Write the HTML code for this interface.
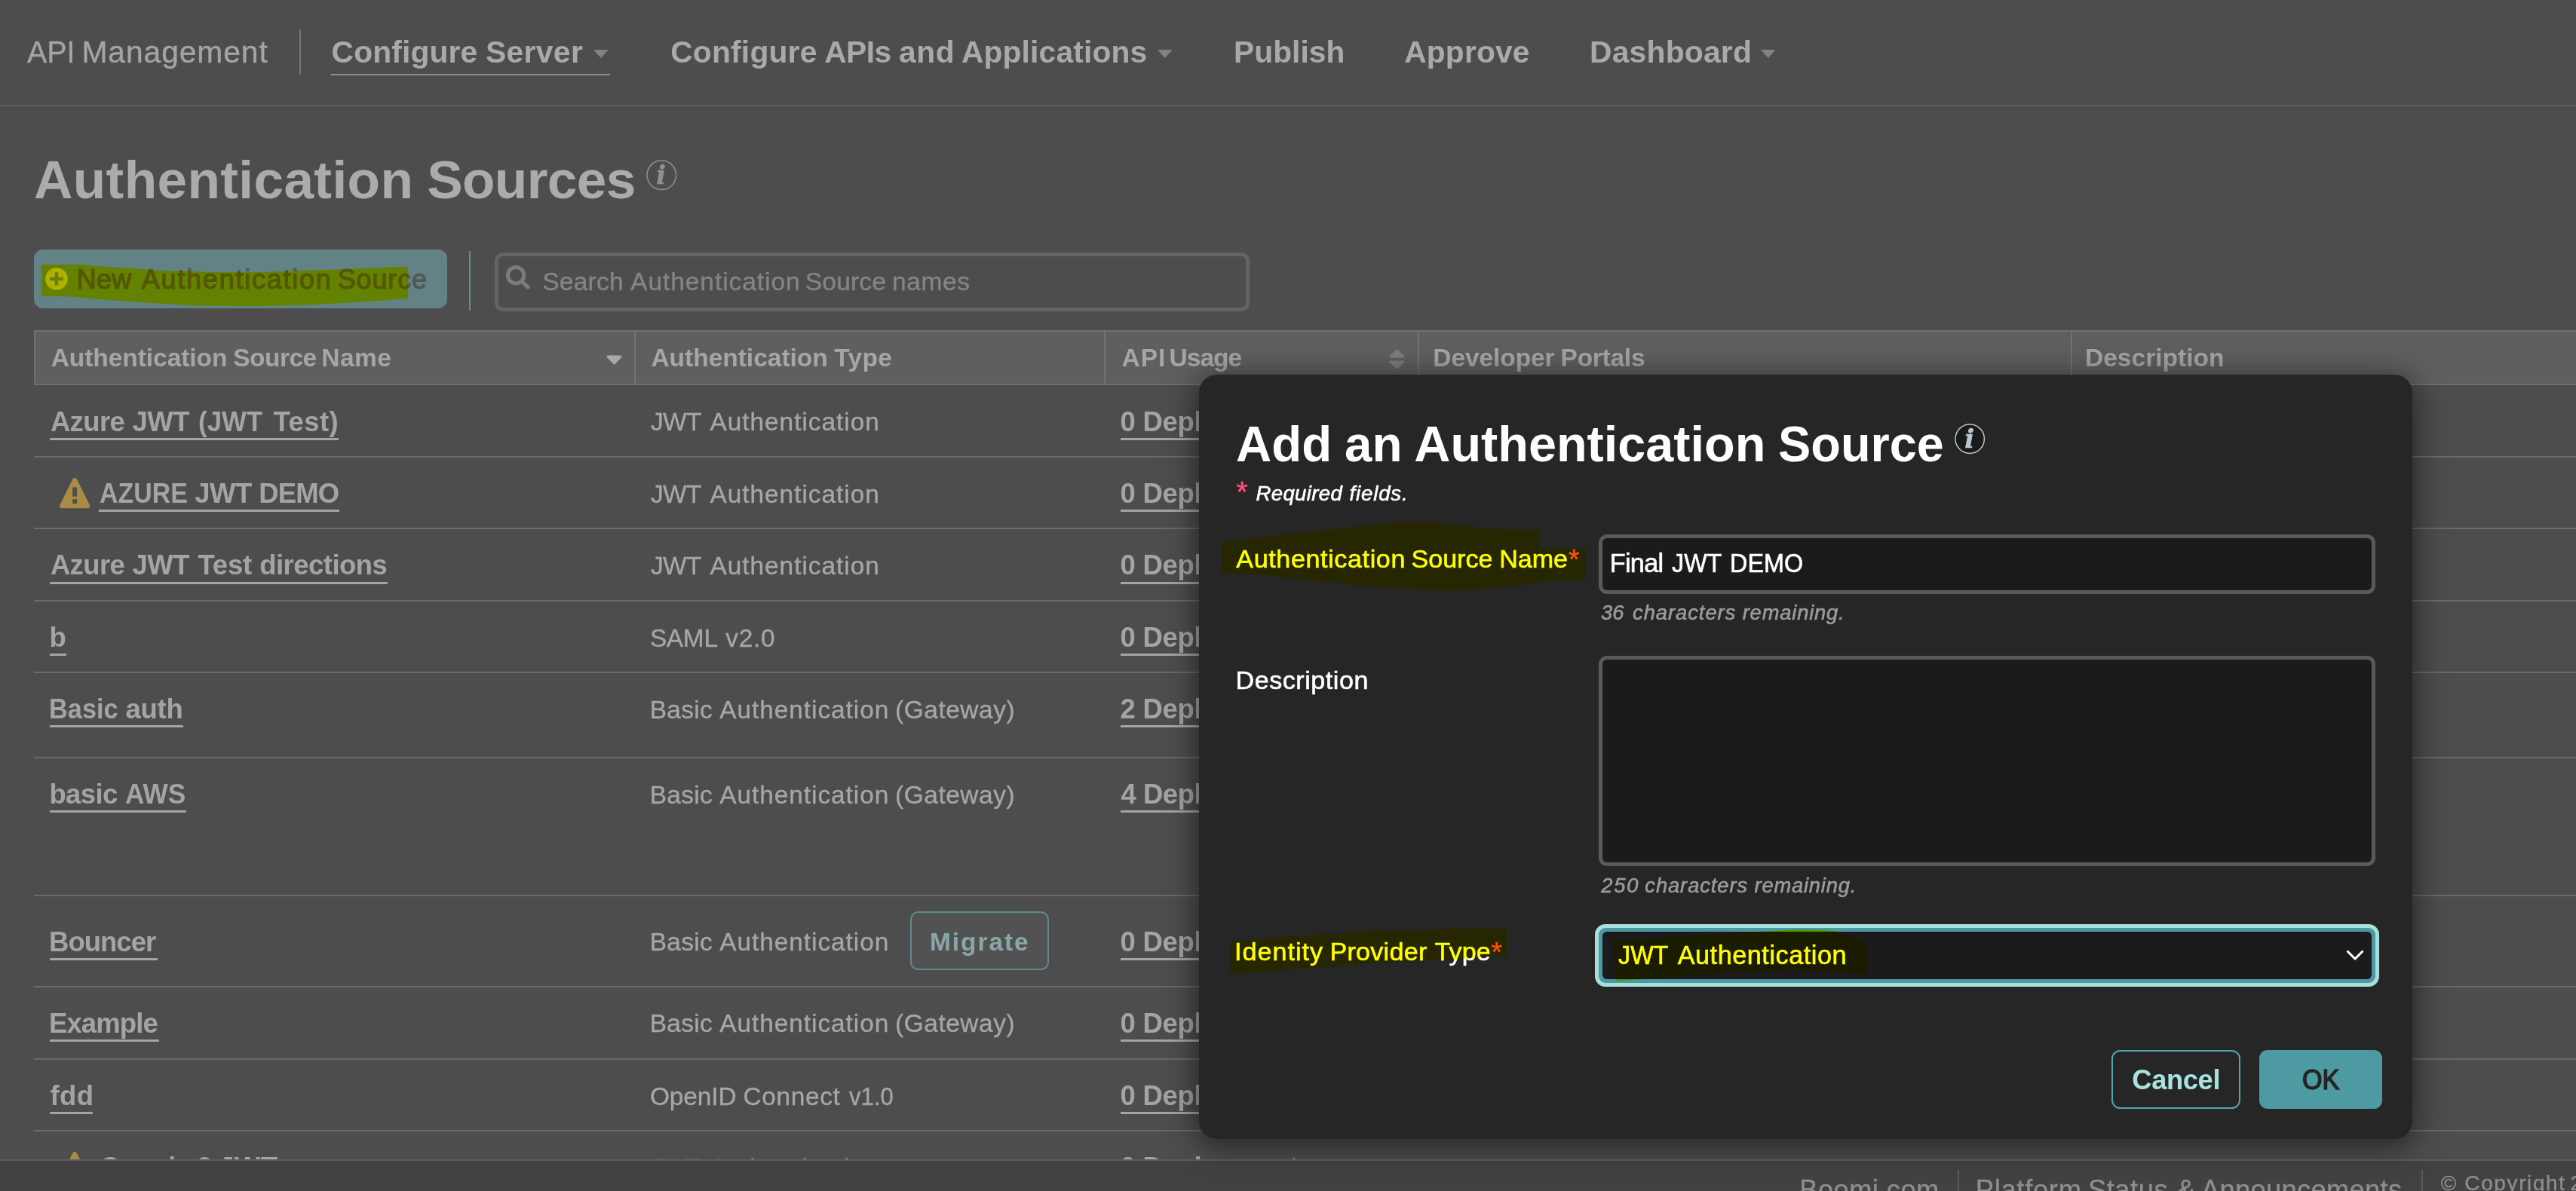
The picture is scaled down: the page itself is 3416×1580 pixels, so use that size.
<!DOCTYPE html>
<html lang="en"><head><meta charset="utf-8"><title>Authentication Sources - API Management</title>
<style>
html,body{margin:0;padding:0}
body{width:3416px;height:1580px;overflow:hidden;background:#4d4d4d;font-family:'Liberation Sans', sans-serif;position:relative}
#page,#modal,#footer{position:absolute;left:0;top:0;width:3416px;height:1580px;overflow:hidden}
span{display:block}
</style></head><body>
<main id="page">
<div style='position:absolute;left:0px;top:139px;width:3416px;height:2px;background:#5e5e5e'></div>
<div style='position:absolute;left:397px;top:39px;width:2px;height:60px;background:#767676'></div>
<div style='position:absolute;left:439px;top:98px;width:370px;height:2px;background:#8b9196'></div>
<svg style='position:absolute;left:786.8px;top:65.5px' width='19.6' height='11' viewBox='0 0 19.6 11'><path d='M0 0H19.6L9.8 11Z' fill='#828282'/></svg>
<svg style='position:absolute;left:1534.6px;top:65.5px' width='19.6' height='11' viewBox='0 0 19.6 11'><path d='M0 0H19.6L9.8 11Z' fill='#828282'/></svg>
<svg style='position:absolute;left:2334.9px;top:65.5px' width='19.6' height='11' viewBox='0 0 19.6 11'><path d='M0 0H19.6L9.8 11Z' fill='#828282'/></svg>
<svg style='position:absolute;left:855.7px;top:210.6px;overflow:visible' width='42.6' height='42.6' viewBox='0 0 42.6 42.6'><circle cx='21.3' cy='21.3' r='19.3' fill='none' stroke='#8c9296' stroke-width='1.5'/></svg>
<div style='position:absolute;left:45px;top:331px;width:548px;height:78px;background:#638285;border-radius:12px'></div>
<svg style='position:absolute;left:60px;top:355px;overflow:visible' width='30' height='30' viewBox='0 0 30 30'><path fill-rule='evenodd' fill='#b0b0b0' d='M15 0.2A14.8 14.8 0 1 1 15 29.8A14.8 14.8 0 1 1 15 0.2Z M12.8 6.3V12.8H6.3V17.2H12.8V23.7H17.2V17.2H23.7V12.8H17.2V6.3Z'/></svg>
<div style='position:absolute;left:622px;top:333px;width:2px;height:79px;background:#5f8c92'></div>
<div style='position:absolute;left:656px;top:335px;width:1000.5px;height:77.5px;box-sizing:border-box;border:5px solid #646464;border-radius:11px;background:#4d4d4d'></div>
<svg style='position:absolute;left:670px;top:351px;overflow:visible' width='34' height='34' viewBox='0 0 34 34'><circle cx='14.1' cy='14.2' r='10.7' fill='none' stroke='#7c7c7c' stroke-width='5'/><path d='M22.2 22.6L30.2 30' stroke='#7c7c7c' stroke-width='5.2' stroke-linecap='round'/></svg>
<div style='position:absolute;left:45px;top:438px;width:3400px;height:73px;box-sizing:border-box;background:#5f5f5f;border:2px solid #707070'></div>
<div style='position:absolute;left:841px;top:440px;width:2px;height:69px;background:#727272'></div>
<div style='position:absolute;left:1464px;top:440px;width:2px;height:69px;background:#727272'></div>
<div style='position:absolute;left:1880px;top:440px;width:2px;height:69px;background:#727272'></div>
<div style='position:absolute;left:2746px;top:440px;width:2px;height:69px;background:#727272'></div>
<svg style='position:absolute;left:803.8px;top:470.8px;overflow:visible' width='21.1' height='12.7' viewBox='0 0 21.1 12.7'><path d='M2 2H19.1L10.55 10.9Z' fill='#aaaaaa' stroke='#aaaaaa' stroke-width='3' stroke-linejoin='round'/></svg>
<svg style='position:absolute;left:1842.4px;top:463px;overflow:visible' width='21.1' height='12.2' viewBox='0 0 21.1 12.2'><path d='M2 10.2H19.1L10.55 2Z' fill='#7c7c7c' stroke='#7c7c7c' stroke-width='3' stroke-linejoin='round'/></svg>
<svg style='position:absolute;left:1842.4px;top:478.2px;overflow:visible' width='21.1' height='12.2' viewBox='0 0 21.1 12.2'><path d='M2 2H19.1L10.55 10.2Z' fill='#7c7c7c' stroke='#7c7c7c' stroke-width='3' stroke-linejoin='round'/></svg>
<div style='position:absolute;left:45px;top:605px;width:3400px;height:2px;background:#6a6a6a'></div>
<div style='position:absolute;left:45px;top:700px;width:3400px;height:2px;background:#6a6a6a'></div>
<div style='position:absolute;left:45px;top:796px;width:3400px;height:2px;background:#6a6a6a'></div>
<div style='position:absolute;left:45px;top:891px;width:3400px;height:2px;background:#6a6a6a'></div>
<div style='position:absolute;left:45px;top:1004px;width:3400px;height:2px;background:#6a6a6a'></div>
<div style='position:absolute;left:45px;top:1187px;width:3400px;height:2px;background:#6a6a6a'></div>
<div style='position:absolute;left:45px;top:1308px;width:3400px;height:2px;background:#6a6a6a'></div>
<div style='position:absolute;left:45px;top:1404px;width:3400px;height:2px;background:#6a6a6a'></div>
<div style='position:absolute;left:45px;top:1499px;width:3400px;height:2px;background:#6a6a6a'></div>
<div style='position:absolute;left:65.9px;top:581px;width:383.1px;height:3px;background:#a4a4a4'></div>
<div style='position:absolute;left:131px;top:676px;width:319.3px;height:3px;background:#a4a4a4'></div>
<div style='position:absolute;left:65.9px;top:772px;width:448.2px;height:3px;background:#a4a4a4'></div>
<div style='position:absolute;left:66.4px;top:867px;width:22.1px;height:3px;background:#a4a4a4'></div>
<div style='position:absolute;left:66.4px;top:962px;width:176.6px;height:3px;background:#a4a4a4'></div>
<div style='position:absolute;left:66.4px;top:1075px;width:180.3px;height:3px;background:#a4a4a4'></div>
<div style='position:absolute;left:66px;top:1271px;width:142.5px;height:3px;background:#a4a4a4'></div>
<div style='position:absolute;left:66px;top:1379px;width:145.0px;height:3px;background:#a4a4a4'></div>
<div style='position:absolute;left:65.6px;top:1475px;width:57.7px;height:3px;background:#a4a4a4'></div>
<div style='position:absolute;left:133px;top:1570px;width:236.2px;height:3px;background:#a4a4a4'></div>
<svg style='position:absolute;left:78.9px;top:633.8px;overflow:visible' width='40.3' height='40.4' viewBox='0 0 40 40'><path d='M20 0 C21.2 0 22.2 0.6 22.8 1.7 L39.5 35.5 C40.6 37.6 39.2 40 36.8 40 L3.2 40 C0.8 40 -0.6 37.6 0.5 35.5 L17.2 1.7 C17.8 0.6 18.8 0 20 0 Z' fill='#a88c43'/><rect x='17.1' y='12.4' width='5.8' height='12.1' fill='#4d4d4d'/><rect x='17.1' y='27.9' width='5.8' height='6' fill='#4d4d4d'/></svg>
<svg style='position:absolute;left:78.9px;top:1528.3px;overflow:visible' width='40.3' height='40.4' viewBox='0 0 40 40'><path d='M20 0 C21.2 0 22.2 0.6 22.8 1.7 L39.5 35.5 C40.6 37.6 39.2 40 36.8 40 L3.2 40 C0.8 40 -0.6 37.6 0.5 35.5 L17.2 1.7 C17.8 0.6 18.8 0 20 0 Z' fill='#a88c43'/><rect x='17.1' y='12.4' width='5.8' height='12.1' fill='#4d4d4d'/><rect x='17.1' y='27.9' width='5.8' height='6' fill='#4d4d4d'/></svg>
<div style='position:absolute;left:1207.3px;top:1209.2px;width:183.6px;height:78.3px;box-sizing:border-box;border:2px solid #5e8a90;border-radius:10.5px;background:#525252'></div>
<span style="position:absolute;left:35.60px;top:45px;font-size:40.8px;line-height:49px;font-weight:400;font-style:normal;color:#a4a4a4;letter-spacing:0.000px;white-space:pre;transform:scaleX(0.9643);transform-origin:0.00px 0;-webkit-text-stroke:0.35px;">API</span>
<span style="position:absolute;left:108.40px;top:45px;font-size:40.8px;line-height:49px;font-weight:400;font-style:normal;color:#a4a4a4;letter-spacing:0.922px;white-space:pre;-webkit-text-stroke:0.35px;">Management</span>
<span style="position:absolute;left:439.60px;top:45px;font-size:40.8px;line-height:49px;font-weight:700;font-style:normal;color:#a9a9a9;letter-spacing:0.119px;white-space:pre;">Configure</span>
<span style="position:absolute;left:643.90px;top:45px;font-size:40.8px;line-height:49px;font-weight:700;font-style:normal;color:#a9a9a9;letter-spacing:0.366px;white-space:pre;">Server</span>
<span style="position:absolute;left:889.20px;top:45px;font-size:40.8px;line-height:49px;font-weight:700;font-style:normal;color:#a9a9a9;letter-spacing:0.194px;white-space:pre;">Configure</span>
<span style="position:absolute;left:1093.20px;top:45px;font-size:40.8px;line-height:49px;font-weight:700;font-style:normal;color:#a9a9a9;letter-spacing:-0.571px;white-space:pre;">APIs</span>
<span style="position:absolute;left:1192.00px;top:45px;font-size:40.8px;line-height:49px;font-weight:700;font-style:normal;color:#a9a9a9;letter-spacing:0.595px;white-space:pre;">and</span>
<span style="position:absolute;left:1274.90px;top:45px;font-size:40.8px;line-height:49px;font-weight:700;font-style:normal;color:#a9a9a9;letter-spacing:0.143px;white-space:pre;">Applications</span>
<span style="position:absolute;left:1636.00px;top:45px;font-size:40.8px;line-height:49px;font-weight:700;font-style:normal;color:#a9a9a9;letter-spacing:0.013px;white-space:pre;">Publish</span>
<span style="position:absolute;left:1862.20px;top:45px;font-size:40.8px;line-height:49px;font-weight:700;font-style:normal;color:#a9a9a9;letter-spacing:0.134px;white-space:pre;">Approve</span>
<span style="position:absolute;left:2108.00px;top:45px;font-size:40.8px;line-height:49px;font-weight:700;font-style:normal;color:#a9a9a9;letter-spacing:0.216px;white-space:pre;">Dashboard</span>
<span style="position:absolute;left:45.00px;top:196px;font-size:71.2px;line-height:85px;font-weight:700;font-style:normal;color:#ababab;letter-spacing:0.354px;white-space:pre;">Authentication</span>
<span style="position:absolute;left:566.20px;top:196px;font-size:71.2px;line-height:85px;font-weight:700;font-style:normal;color:#ababab;letter-spacing:-0.641px;white-space:pre;">Sources</span>
<span style="position:absolute;left:101.70px;top:349px;font-size:36.0px;line-height:43px;font-weight:400;font-style:normal;color:#565656;letter-spacing:0.233px;white-space:pre;-webkit-text-stroke:1.2px #565656;">New</span>
<span style="position:absolute;left:187.80px;top:349px;font-size:36.0px;line-height:43px;font-weight:400;font-style:normal;color:#565656;letter-spacing:1.750px;white-space:pre;-webkit-text-stroke:1.2px #565656;">Authentication</span>
<span style="position:absolute;left:447.70px;top:349px;font-size:36.0px;line-height:43px;font-weight:400;font-style:normal;color:#565656;letter-spacing:0.849px;white-space:pre;-webkit-text-stroke:1.2px #565656;">Source</span>
<span style="position:absolute;left:719.20px;top:354px;font-size:33.6px;line-height:40px;font-weight:400;font-style:normal;color:#858585;letter-spacing:0.214px;white-space:pre;-webkit-text-stroke:0.35px;">Search</span>
<span style="position:absolute;left:836.10px;top:354px;font-size:33.6px;line-height:40px;font-weight:400;font-style:normal;color:#858585;letter-spacing:0.904px;white-space:pre;-webkit-text-stroke:0.35px;">Authentication</span>
<span style="position:absolute;left:1067.80px;top:354px;font-size:33.6px;line-height:40px;font-weight:400;font-style:normal;color:#858585;letter-spacing:0.154px;white-space:pre;-webkit-text-stroke:0.35px;">Source</span>
<span style="position:absolute;left:1183.00px;top:354px;font-size:33.6px;line-height:40px;font-weight:400;font-style:normal;color:#858585;letter-spacing:0.573px;white-space:pre;-webkit-text-stroke:0.35px;">names</span>
<span style="position:absolute;left:67.70px;top:455px;font-size:33.5px;line-height:40px;font-weight:700;font-style:normal;color:#a6a6a6;letter-spacing:-0.055px;white-space:pre;">Authentication</span>
<span style="position:absolute;left:309.30px;top:455px;font-size:33.5px;line-height:40px;font-weight:700;font-style:normal;color:#a6a6a6;letter-spacing:-0.529px;white-space:pre;">Source</span>
<span style="position:absolute;left:426.30px;top:455px;font-size:33.5px;line-height:40px;font-weight:700;font-style:normal;color:#a6a6a6;letter-spacing:0.460px;white-space:pre;">Name</span>
<span style="position:absolute;left:863.40px;top:455px;font-size:33.5px;line-height:40px;font-weight:700;font-style:normal;color:#a6a6a6;letter-spacing:-0.009px;white-space:pre;">Authentication</span>
<span style="position:absolute;left:1106.20px;top:455px;font-size:33.5px;line-height:40px;font-weight:700;font-style:normal;color:#a6a6a6;letter-spacing:0.343px;white-space:pre;">Type</span>
<span style="position:absolute;left:1487.60px;top:455px;font-size:33.5px;line-height:40px;font-weight:700;font-style:normal;color:#a6a6a6;letter-spacing:0.974px;white-space:pre;">API</span>
<span style="position:absolute;left:1550.50px;top:455px;font-size:33.5px;line-height:40px;font-weight:700;font-style:normal;color:#a6a6a6;letter-spacing:-0.958px;white-space:pre;">Usage</span>
<span style="position:absolute;left:1900.30px;top:455px;font-size:33.5px;line-height:40px;font-weight:700;font-style:normal;color:#a6a6a6;letter-spacing:-0.083px;white-space:pre;">Developer</span>
<span style="position:absolute;left:2069.60px;top:455px;font-size:33.5px;line-height:40px;font-weight:700;font-style:normal;color:#a6a6a6;letter-spacing:-0.275px;white-space:pre;">Portals</span>
<span style="position:absolute;left:2765.00px;top:455px;font-size:33.5px;line-height:40px;font-weight:700;font-style:normal;color:#a6a6a6;letter-spacing:0.017px;white-space:pre;">Description</span>
<span style="position:absolute;left:66.90px;top:538px;font-size:36.5px;line-height:44px;font-weight:700;font-style:normal;color:#a4a4a4;letter-spacing:-0.631px;white-space:pre;">Azure</span>
<span style="position:absolute;left:175.50px;top:538px;font-size:36.5px;line-height:44px;font-weight:700;font-style:normal;color:#a4a4a4;letter-spacing:-0.526px;white-space:pre;">JWT</span>
<span style="position:absolute;left:263.20px;top:538px;font-size:36.5px;line-height:44px;font-weight:700;font-style:normal;color:#a4a4a4;letter-spacing:0.000px;white-space:pre;transform:scaleX(0.9544);transform-origin:1.00px 0;">(JWT</span>
<span style="position:absolute;left:362.50px;top:538px;font-size:36.5px;line-height:44px;font-weight:700;font-style:normal;color:#a4a4a4;letter-spacing:0.414px;white-space:pre;">Test)</span>
<span style="position:absolute;left:862.90px;top:540px;font-size:33.4px;line-height:40px;font-weight:400;font-style:normal;color:#a6a6a6;letter-spacing:-0.557px;white-space:pre;-webkit-text-stroke:0.35px;">JWT</span>
<span style="position:absolute;left:941.40px;top:540px;font-size:33.4px;line-height:40px;font-weight:400;font-style:normal;color:#a6a6a6;letter-spacing:0.987px;white-space:pre;-webkit-text-stroke:0.35px;">Authentication</span>
<span style="position:absolute;left:1485.50px;top:538px;font-size:36.5px;line-height:44px;font-weight:700;font-style:normal;color:#a4a4a4;letter-spacing:-0.281px;white-space:pre;">0 Deployments</span><div style='position:absolute;left:1485.5px;top:581px;width:256.5px;height:3px;background:#a4a4a4'></div>
<span style="position:absolute;left:132.00px;top:633px;font-size:36.5px;line-height:44px;font-weight:700;font-style:normal;color:#a4a4a4;letter-spacing:0.000px;white-space:pre;transform:scaleX(0.9287);transform-origin:0.00px 0;">AZURE</span>
<span style="position:absolute;left:258.20px;top:633px;font-size:36.5px;line-height:44px;font-weight:700;font-style:normal;color:#a4a4a4;letter-spacing:-0.476px;white-space:pre;">JWT</span>
<span style="position:absolute;left:343.20px;top:633px;font-size:36.5px;line-height:44px;font-weight:700;font-style:normal;color:#a4a4a4;letter-spacing:-0.836px;white-space:pre;">DEMO</span>
<span style="position:absolute;left:862.90px;top:636px;font-size:33.4px;line-height:40px;font-weight:400;font-style:normal;color:#a6a6a6;letter-spacing:-0.557px;white-space:pre;-webkit-text-stroke:0.35px;">JWT</span>
<span style="position:absolute;left:941.40px;top:636px;font-size:33.4px;line-height:40px;font-weight:400;font-style:normal;color:#a6a6a6;letter-spacing:0.987px;white-space:pre;-webkit-text-stroke:0.35px;">Authentication</span>
<span style="position:absolute;left:1485.50px;top:633px;font-size:36.5px;line-height:44px;font-weight:700;font-style:normal;color:#a4a4a4;letter-spacing:-0.281px;white-space:pre;">0 Deployments</span><div style='position:absolute;left:1485.5px;top:676px;width:256.5px;height:3px;background:#a4a4a4'></div>
<span style="position:absolute;left:66.90px;top:728px;font-size:36.5px;line-height:44px;font-weight:700;font-style:normal;color:#a4a4a4;letter-spacing:-0.631px;white-space:pre;">Azure</span>
<span style="position:absolute;left:175.50px;top:728px;font-size:36.5px;line-height:44px;font-weight:700;font-style:normal;color:#a4a4a4;letter-spacing:-0.526px;white-space:pre;">JWT</span>
<span style="position:absolute;left:262.40px;top:728px;font-size:36.5px;line-height:44px;font-weight:700;font-style:normal;color:#a4a4a4;letter-spacing:-0.196px;white-space:pre;">Test</span>
<span style="position:absolute;left:344.20px;top:728px;font-size:36.5px;line-height:44px;font-weight:700;font-style:normal;color:#a4a4a4;letter-spacing:-0.526px;white-space:pre;">directions</span>
<span style="position:absolute;left:862.90px;top:731px;font-size:33.4px;line-height:40px;font-weight:400;font-style:normal;color:#a6a6a6;letter-spacing:-0.557px;white-space:pre;-webkit-text-stroke:0.35px;">JWT</span>
<span style="position:absolute;left:941.40px;top:731px;font-size:33.4px;line-height:40px;font-weight:400;font-style:normal;color:#a6a6a6;letter-spacing:0.987px;white-space:pre;-webkit-text-stroke:0.35px;">Authentication</span>
<span style="position:absolute;left:1485.50px;top:728px;font-size:36.5px;line-height:44px;font-weight:700;font-style:normal;color:#a4a4a4;letter-spacing:-0.281px;white-space:pre;">0 Deployments</span><div style='position:absolute;left:1485.5px;top:772px;width:256.5px;height:3px;background:#a4a4a4'></div>
<span style="position:absolute;left:65.40px;top:824px;font-size:36.5px;line-height:44px;font-weight:700;font-style:normal;color:#a4a4a4;letter-spacing:0.000px;white-space:pre;">b</span>
<span style="position:absolute;left:861.90px;top:827px;font-size:33.4px;line-height:40px;font-weight:400;font-style:normal;color:#a6a6a6;letter-spacing:-0.289px;white-space:pre;-webkit-text-stroke:0.35px;">SAML</span>
<span style="position:absolute;left:962.30px;top:827px;font-size:33.4px;line-height:40px;font-weight:400;font-style:normal;color:#a6a6a6;letter-spacing:0.682px;white-space:pre;-webkit-text-stroke:0.35px;">v2.0</span>
<span style="position:absolute;left:1485.50px;top:824px;font-size:36.5px;line-height:44px;font-weight:700;font-style:normal;color:#a4a4a4;letter-spacing:-0.281px;white-space:pre;">0 Deployments</span><div style='position:absolute;left:1485.5px;top:867px;width:256.5px;height:3px;background:#a4a4a4'></div>
<span style="position:absolute;left:65.40px;top:919px;font-size:36.5px;line-height:44px;font-weight:700;font-style:normal;color:#a4a4a4;letter-spacing:0.000px;white-space:pre;transform:scaleX(0.9389);transform-origin:2.00px 0;">Basic</span>
<span style="position:absolute;left:166.60px;top:919px;font-size:36.5px;line-height:44px;font-weight:700;font-style:normal;color:#a4a4a4;letter-spacing:-0.284px;white-space:pre;">auth</span>
<span style="position:absolute;left:861.70px;top:922px;font-size:33.4px;line-height:40px;font-weight:400;font-style:normal;color:#a6a6a6;letter-spacing:0.310px;white-space:pre;-webkit-text-stroke:0.35px;">Basic</span>
<span style="position:absolute;left:954.30px;top:922px;font-size:33.4px;line-height:40px;font-weight:400;font-style:normal;color:#a6a6a6;letter-spacing:0.948px;white-space:pre;-webkit-text-stroke:0.35px;">Authentication</span>
<span style="position:absolute;left:1187.10px;top:922px;font-size:33.4px;line-height:40px;font-weight:400;font-style:normal;color:#a6a6a6;letter-spacing:0.550px;white-space:pre;-webkit-text-stroke:0.35px;">(Gateway)</span>
<span style="position:absolute;left:1485.50px;top:919px;font-size:36.5px;line-height:44px;font-weight:700;font-style:normal;color:#a4a4a4;letter-spacing:-0.281px;white-space:pre;">2 Deployments</span><div style='position:absolute;left:1485.5px;top:962px;width:256.5px;height:3px;background:#a4a4a4'></div>
<span style="position:absolute;left:65.40px;top:1032px;font-size:36.5px;line-height:44px;font-weight:700;font-style:normal;color:#a4a4a4;letter-spacing:-0.636px;white-space:pre;">basic</span>
<span style="position:absolute;left:166.30px;top:1032px;font-size:36.5px;line-height:44px;font-weight:700;font-style:normal;color:#a4a4a4;letter-spacing:0.000px;white-space:pre;transform:scaleX(0.9644);transform-origin:0.00px 0;">AWS</span>
<span style="position:absolute;left:861.70px;top:1035px;font-size:33.4px;line-height:40px;font-weight:400;font-style:normal;color:#a6a6a6;letter-spacing:0.310px;white-space:pre;-webkit-text-stroke:0.35px;">Basic</span>
<span style="position:absolute;left:954.30px;top:1035px;font-size:33.4px;line-height:40px;font-weight:400;font-style:normal;color:#a6a6a6;letter-spacing:0.948px;white-space:pre;-webkit-text-stroke:0.35px;">Authentication</span>
<span style="position:absolute;left:1187.10px;top:1035px;font-size:33.4px;line-height:40px;font-weight:400;font-style:normal;color:#a6a6a6;letter-spacing:0.550px;white-space:pre;-webkit-text-stroke:0.35px;">(Gateway)</span>
<span style="position:absolute;left:1486.50px;top:1032px;font-size:36.5px;line-height:44px;font-weight:700;font-style:normal;color:#a4a4a4;letter-spacing:-0.481px;white-space:pre;">4 Deployments</span><div style='position:absolute;left:1485.5px;top:1075px;width:255.1px;height:3px;background:#a4a4a4'></div>
<span style="position:absolute;left:65.00px;top:1228px;font-size:36.5px;line-height:44px;font-weight:700;font-style:normal;color:#a4a4a4;letter-spacing:-0.976px;white-space:pre;">Bouncer</span>
<span style="position:absolute;left:861.70px;top:1230px;font-size:33.4px;line-height:40px;font-weight:400;font-style:normal;color:#a6a6a6;letter-spacing:0.310px;white-space:pre;-webkit-text-stroke:0.35px;">Basic</span>
<span style="position:absolute;left:954.30px;top:1230px;font-size:33.4px;line-height:40px;font-weight:400;font-style:normal;color:#a6a6a6;letter-spacing:0.948px;white-space:pre;-webkit-text-stroke:0.35px;">Authentication</span>
<span style="position:absolute;left:1485.50px;top:1228px;font-size:36.5px;line-height:44px;font-weight:700;font-style:normal;color:#a4a4a4;letter-spacing:-0.281px;white-space:pre;">0 Deployments</span><div style='position:absolute;left:1485.5px;top:1271px;width:256.5px;height:3px;background:#a4a4a4'></div>
<span style="position:absolute;left:65.00px;top:1336px;font-size:36.5px;line-height:44px;font-weight:700;font-style:normal;color:#a4a4a4;letter-spacing:-0.890px;white-space:pre;">Example</span>
<span style="position:absolute;left:861.70px;top:1338px;font-size:33.4px;line-height:40px;font-weight:400;font-style:normal;color:#a6a6a6;letter-spacing:0.310px;white-space:pre;-webkit-text-stroke:0.35px;">Basic</span>
<span style="position:absolute;left:954.30px;top:1338px;font-size:33.4px;line-height:40px;font-weight:400;font-style:normal;color:#a6a6a6;letter-spacing:0.948px;white-space:pre;-webkit-text-stroke:0.35px;">Authentication</span>
<span style="position:absolute;left:1187.10px;top:1338px;font-size:33.4px;line-height:40px;font-weight:400;font-style:normal;color:#a6a6a6;letter-spacing:0.550px;white-space:pre;-webkit-text-stroke:0.35px;">(Gateway)</span>
<span style="position:absolute;left:1485.50px;top:1336px;font-size:36.5px;line-height:44px;font-weight:700;font-style:normal;color:#a4a4a4;letter-spacing:-0.281px;white-space:pre;">0 Deployments</span><div style='position:absolute;left:1485.5px;top:1379px;width:256.5px;height:3px;background:#a4a4a4'></div>
<span style="position:absolute;left:66.60px;top:1432px;font-size:36.5px;line-height:44px;font-weight:700;font-style:normal;color:#a4a4a4;letter-spacing:0.373px;white-space:pre;">fdd</span>
<span style="position:absolute;left:861.90px;top:1435px;font-size:33.4px;line-height:40px;font-weight:400;font-style:normal;color:#a6a6a6;letter-spacing:-0.073px;white-space:pre;-webkit-text-stroke:0.35px;">OpenID</span>
<span style="position:absolute;left:985.60px;top:1435px;font-size:33.4px;line-height:40px;font-weight:400;font-style:normal;color:#a6a6a6;letter-spacing:0.650px;white-space:pre;-webkit-text-stroke:0.35px;">Connect</span>
<span style="position:absolute;left:1125.80px;top:1435px;font-size:33.4px;line-height:40px;font-weight:400;font-style:normal;color:#a6a6a6;letter-spacing:0.000px;white-space:pre;transform:scaleX(0.9336);transform-origin:0.00px 0;-webkit-text-stroke:0.35px;">v1.0</span>
<span style="position:absolute;left:1485.50px;top:1432px;font-size:36.5px;line-height:44px;font-weight:700;font-style:normal;color:#a4a4a4;letter-spacing:-0.281px;white-space:pre;">0 Deployments</span><div style='position:absolute;left:1485.5px;top:1475px;width:256.5px;height:3px;background:#a4a4a4'></div>
<span style="position:absolute;left:133.00px;top:1527px;font-size:36.5px;line-height:44px;font-weight:700;font-style:normal;color:#a4a4a4;letter-spacing:0.000px;white-space:pre;transform:scaleX(0.9484);transform-origin:1.00px 0;">Google</span>
<span style="position:absolute;left:261.00px;top:1527px;font-size:36.5px;line-height:44px;font-weight:700;font-style:normal;color:#a4a4a4;letter-spacing:0.000px;white-space:pre;">2</span>
<span style="position:absolute;left:290.00px;top:1527px;font-size:36.5px;line-height:44px;font-weight:700;font-style:normal;color:#a4a4a4;letter-spacing:0.474px;white-space:pre;">JWT</span>
<span style="position:absolute;left:862.90px;top:1530px;font-size:33.4px;line-height:40px;font-weight:400;font-style:normal;color:#a6a6a6;letter-spacing:-0.557px;white-space:pre;-webkit-text-stroke:0.35px;">JWT</span>
<span style="position:absolute;left:941.40px;top:1530px;font-size:33.4px;line-height:40px;font-weight:400;font-style:normal;color:#a6a6a6;letter-spacing:0.987px;white-space:pre;-webkit-text-stroke:0.35px;">Authentication</span>
<span style="position:absolute;left:1485.50px;top:1527px;font-size:36.5px;line-height:44px;font-weight:700;font-style:normal;color:#a4a4a4;letter-spacing:-0.281px;white-space:pre;">0 Deployments</span><div style='position:absolute;left:1485.5px;top:1570px;width:256.5px;height:3px;background:#a4a4a4'></div>
<span style="position:absolute;left:1233.10px;top:1230px;font-size:33.4px;line-height:40px;font-weight:700;font-style:normal;color:#88a8a8;letter-spacing:1.953px;white-space:pre;">Migrate</span>
<span style="position:absolute;left:870.17px;top:212.35px;font-family:'DejaVu Serif',serif;font-size:33.68px;line-height:40.42px;font-weight:700;font-style:italic;color:#8c9296;-webkit-text-stroke:0.5px">i</span>
</main>
<footer id="footer">
<div style='position:absolute;left:0px;top:1538px;width:3416px;height:42px;background:#424242;border-top:2px solid #5c5c5c;box-sizing:border-box'></div>
<div style='position:absolute;left:2596px;top:1552px;width:2px;height:40px;background:#5a5a5a'></div>
<div style='position:absolute;left:3211px;top:1552px;width:2px;height:40px;background:#5a5a5a'></div>
<span style="position:absolute;left:2386.30px;top:1557px;font-size:36.3px;line-height:44px;font-weight:400;font-style:normal;color:#8e8e8e;letter-spacing:0.424px;white-space:pre;-webkit-text-stroke:0.35px;">Boomi.com</span>
<span style="position:absolute;left:2619.70px;top:1557px;font-size:36.3px;line-height:44px;font-weight:400;font-style:normal;color:#8e8e8e;letter-spacing:0.728px;white-space:pre;-webkit-text-stroke:0.35px;">Platform</span>
<span style="position:absolute;left:2768.90px;top:1557px;font-size:36.3px;line-height:44px;font-weight:400;font-style:normal;color:#8e8e8e;letter-spacing:0.568px;white-space:pre;-webkit-text-stroke:0.35px;">Status</span>
<span style="position:absolute;left:2886.70px;top:1557px;font-size:36.3px;line-height:44px;font-weight:400;font-style:normal;color:#8e8e8e;letter-spacing:0.000px;white-space:pre;-webkit-text-stroke:0.35px;">&amp;</span>
<span style="position:absolute;left:2918.90px;top:1557px;font-size:36.3px;line-height:44px;font-weight:400;font-style:normal;color:#8e8e8e;letter-spacing:0.327px;white-space:pre;-webkit-text-stroke:0.35px;">Announcements</span>
<span style="position:absolute;left:3236.80px;top:1553px;font-size:28.0px;line-height:34px;font-weight:400;font-style:normal;color:#8e8e8e;letter-spacing:0.000px;white-space:pre;-webkit-text-stroke:0.35px;">©</span>
<span style="position:absolute;left:3268.30px;top:1553px;font-size:28.0px;line-height:34px;font-weight:400;font-style:normal;color:#8e8e8e;letter-spacing:1.617px;white-space:pre;-webkit-text-stroke:0.35px;">Copyright</span>
<span style="position:absolute;left:3408.40px;top:1553px;font-size:28.0px;line-height:34px;font-weight:400;font-style:normal;color:#8e8e8e;letter-spacing:0.000px;white-space:pre;-webkit-text-stroke:0.35px;">2024 Boomi, LP. or its subsidiaries.</span>
</footer>
<div id="modal" role="dialog" aria-label="Add an Authentication Source">
<div style='position:absolute;left:1590px;top:497px;width:1609px;height:1014px;background:#262626;border-radius:24px;box-shadow:0 6px 42px 3px rgba(0,0,0,0.55)'></div>
<svg style='position:absolute;left:2590.8px;top:560.8px;overflow:visible' width='42.4' height='42.4' viewBox='0 0 42.4 42.4'><circle cx='21.2' cy='21.2' r='19.2' fill='#1b1b1b' stroke='#b9c6ce' stroke-width='1.5'/></svg>
<div style='position:absolute;left:2120px;top:709px;width:1030px;height:79.3px;box-sizing:border-box;border:5px solid #5a5a5a;border-radius:11px;background:#1b1b1b'></div>
<div style='position:absolute;left:2120px;top:869.5px;width:1030px;height:279px;box-sizing:border-box;border:5px solid #5a5a5a;border-radius:11px;background:#1b1b1b'></div>
<div style='position:absolute;left:2115px;top:1226px;width:1040px;height:83px;box-sizing:border-box;border:5px solid #a6dfdc;border-radius:14px;background:#4d98a1'></div>
<div style='position:absolute;left:2125px;top:1236px;width:1020px;height:63px;border-radius:6px;background:#1b1b1b'></div>
<svg style='position:absolute;left:3110px;top:1259px;overflow:visible' width='26' height='16' viewBox='0 0 26 16'><path d='M2.5 2.5L13 13L23.5 2.5' fill='none' stroke='#ffffff' stroke-width='3'/></svg>
<div style='position:absolute;left:2800px;top:1392.6px;width:171.2px;height:78.6px;box-sizing:border-box;border:2.4px solid #52a5ad;border-radius:11.5px'></div>
<div style='position:absolute;left:2995.8px;top:1393.1px;width:163.6px;height:77.8px;background:#4d9aa2;border-radius:11px'></div>
<span style="position:absolute;left:1639.20px;top:549px;font-size:66.6px;line-height:80px;font-weight:700;font-style:normal;color:#ffffff;letter-spacing:0.000px;white-space:pre;transform:scaleX(0.9818);transform-origin:1.00px 0;">Add</span>
<span style="position:absolute;left:1782.70px;top:549px;font-size:66.6px;line-height:80px;font-weight:700;font-style:normal;color:#ffffff;letter-spacing:0.000px;white-space:pre;transform:scaleX(0.9830);transform-origin:1.00px 0;">an</span>
<span style="position:absolute;left:1875.30px;top:549px;font-size:66.6px;line-height:80px;font-weight:700;font-style:normal;color:#ffffff;letter-spacing:-0.004px;white-space:pre;">Authentication</span>
<span style="position:absolute;left:2358.30px;top:549px;font-size:66.6px;line-height:80px;font-weight:700;font-style:normal;color:#ffffff;letter-spacing:0.000px;white-space:pre;transform:scaleX(0.9738);transform-origin:1.00px 0;">Source</span>
<span style="position:absolute;left:1665.40px;top:638px;font-size:27.6px;line-height:33px;font-weight:400;font-style:italic;color:#ffffff;letter-spacing:0.366px;white-space:pre;-webkit-text-stroke:0.6px;">Required</span>
<span style="position:absolute;left:1789.50px;top:638px;font-size:27.6px;line-height:33px;font-weight:400;font-style:italic;color:#ffffff;letter-spacing:0.845px;white-space:pre;-webkit-text-stroke:0.6px;">fields.</span>
<span style="position:absolute;left:1639.30px;top:721px;font-size:34.1px;line-height:41px;font-weight:400;font-style:normal;color:#ffffff;letter-spacing:0.621px;white-space:pre;-webkit-text-stroke:0.6px;">Authentication</span>
<span style="position:absolute;left:1871.50px;top:721px;font-size:34.1px;line-height:41px;font-weight:400;font-style:normal;color:#ffffff;letter-spacing:-0.006px;white-space:pre;-webkit-text-stroke:0.6px;">Source</span>
<span style="position:absolute;left:1988.20px;top:721px;font-size:34.1px;line-height:41px;font-weight:400;font-style:normal;color:#ffffff;letter-spacing:-0.051px;white-space:pre;-webkit-text-stroke:0.6px;">Name</span>
<span style="position:absolute;left:2134.80px;top:727px;font-size:34.2px;line-height:41px;font-weight:400;font-style:normal;color:#ffffff;letter-spacing:-0.704px;white-space:pre;-webkit-text-stroke:0.6px;">Final</span>
<span style="position:absolute;left:2217.10px;top:727px;font-size:34.2px;line-height:41px;font-weight:400;font-style:normal;color:#ffffff;letter-spacing:0.000px;white-space:pre;transform:scaleX(0.9436);transform-origin:0.00px 0;-webkit-text-stroke:0.6px;">JWT</span>
<span style="position:absolute;left:2294.40px;top:727px;font-size:34.2px;line-height:41px;font-weight:400;font-style:normal;color:#ffffff;letter-spacing:0.000px;white-space:pre;transform:scaleX(0.9457);transform-origin:2.00px 0;-webkit-text-stroke:0.6px;">DEMO</span>
<span style="position:absolute;left:2123.10px;top:796px;font-size:27.3px;line-height:33px;font-weight:400;font-style:italic;color:#9b9b9b;letter-spacing:-0.094px;white-space:pre;-webkit-text-stroke:0.6px;">36</span>
<span style="position:absolute;left:2165.00px;top:796px;font-size:27.3px;line-height:33px;font-weight:400;font-style:italic;color:#9b9b9b;letter-spacing:0.990px;white-space:pre;-webkit-text-stroke:0.6px;">characters</span>
<span style="position:absolute;left:2310.70px;top:796px;font-size:27.3px;line-height:33px;font-weight:400;font-style:italic;color:#9b9b9b;letter-spacing:0.837px;white-space:pre;-webkit-text-stroke:0.6px;">remaining.</span>
<span style="position:absolute;left:1638.50px;top:882px;font-size:34.1px;line-height:41px;font-weight:400;font-style:normal;color:#ffffff;letter-spacing:0.548px;white-space:pre;-webkit-text-stroke:0.6px;">Description</span>
<span style="position:absolute;left:2123.30px;top:1158px;font-size:27.3px;line-height:33px;font-weight:400;font-style:italic;color:#9b9b9b;letter-spacing:1.767px;white-space:pre;-webkit-text-stroke:0.6px;">250</span>
<span style="position:absolute;left:2181.30px;top:1158px;font-size:27.3px;line-height:33px;font-weight:400;font-style:italic;color:#9b9b9b;letter-spacing:0.935px;white-space:pre;-webkit-text-stroke:0.6px;">characters</span>
<span style="position:absolute;left:2326.60px;top:1158px;font-size:27.3px;line-height:33px;font-weight:400;font-style:italic;color:#9b9b9b;letter-spacing:0.803px;white-space:pre;-webkit-text-stroke:0.6px;">remaining.</span>
<span style="position:absolute;left:1637.00px;top:1242px;font-size:34.1px;line-height:41px;font-weight:400;font-style:normal;color:#ffffff;letter-spacing:1.038px;white-space:pre;-webkit-text-stroke:0.6px;">Identity</span>
<span style="position:absolute;left:1763.50px;top:1242px;font-size:34.1px;line-height:41px;font-weight:400;font-style:normal;color:#ffffff;letter-spacing:0.263px;white-space:pre;-webkit-text-stroke:0.6px;">Provider</span>
<span style="position:absolute;left:1902.50px;top:1242px;font-size:34.1px;line-height:41px;font-weight:400;font-style:normal;color:#ffffff;letter-spacing:0.121px;white-space:pre;-webkit-text-stroke:0.6px;">Type</span>
<span style="position:absolute;left:2146.10px;top:1247px;font-size:34.2px;line-height:41px;font-weight:400;font-style:normal;color:#ffffff;letter-spacing:0.000px;white-space:pre;transform:scaleX(0.9436);transform-origin:0.00px 0;-webkit-text-stroke:0.6px;">JWT</span>
<span style="position:absolute;left:2224.70px;top:1247px;font-size:34.2px;line-height:41px;font-weight:400;font-style:normal;color:#ffffff;letter-spacing:0.548px;white-space:pre;-webkit-text-stroke:0.6px;">Authentication</span>
<span style="position:absolute;left:2827.30px;top:1411px;font-size:36.3px;line-height:44px;font-weight:700;font-style:normal;color:#a9e3df;letter-spacing:-0.369px;white-space:pre;">Cancel</span>
<span style="position:absolute;left:3052.70px;top:1411px;font-size:36.3px;line-height:44px;font-weight:400;font-style:normal;color:#252525;letter-spacing:0.000px;white-space:pre;transform:scaleX(0.9406);transform-origin:1.00px 0;-webkit-text-stroke:1.5px #252525;">OK</span>
<span style="position:absolute;left:2605.17px;top:562.45px;font-family:'DejaVu Serif',serif;font-size:33.68px;line-height:40.42px;font-weight:700;font-style:italic;color:#b9c6ce;-webkit-text-stroke:0.5px">i</span>
<span style="position:absolute;left:1639.52px;top:629.92px;font-family:'Liberation Sans',serif;font-size:38.89px;line-height:46.67px;font-weight:400;font-style:normal;color:#ff4d79;-webkit-text-stroke:0.5px">*</span>
<span style="position:absolute;left:2080.04px;top:719.75px;font-family:'Liberation Sans',serif;font-size:37.22px;line-height:44.67px;font-weight:400;font-style:normal;color:#ff5070;-webkit-text-stroke:0.5px">*</span>
<span style="position:absolute;left:1977.54px;top:1241.25px;font-family:'Liberation Sans',serif;font-size:37.22px;line-height:44.67px;font-weight:400;font-style:normal;color:#ff5070;-webkit-text-stroke:0.5px">*</span>
</div>
<svg id='hl' style='position:absolute;left:0;top:0;mix-blend-mode:multiply;pointer-events:none' width='3416' height='1580' viewBox='0 0 3416 1580'><path d='M54.8 351.1L105.2 351.1L148.7 354.3L213.9 358.7L279.1 360.9L344.4 360.9L409.6 358.7L474.8 356.5L518.3 354.3L541.1 353.9L541.1 395.8L520 397.8L496.5 399.6L460 401.8L431.3 403.3L390 404.9L344.4 405.9L257.4 405.4L192.2 401.5L127 396.7L94.4 393.5L54.8 392.8Z' fill='#ffff00'/><path d='M1619.8 719.4L1680.7 712.3L1741.3 705.2L1801.9 698.2L1842.2 693.7L1882.6 692.1L1923 695.1L1963.3 700.2L2003.7 702.6L2042.1 703.2L2042.1 727.5L2075 726.5L2102.8 728.2L2102.8 770.4L2081.6 769.6L2053.9 770.6L2026.2 775L2003.7 777.9L1963.3 781.5L1923 783.4L1882.6 781.9L1801.9 776.9L1741.3 769.8L1680.7 763.2L1619.8 760.3Z' fill='#ffff00'/><path d='M1631.8 1249.1L1697.8 1243.4L1763 1239.3L1812 1234.5L1877.2 1234.5L1926.1 1232L1997.8 1231.5L1997.8 1267.9L1926.1 1272.8L1877.2 1274.4L1812 1278.5L1763 1282.6L1697.8 1286.6L1648.9 1291.5L1631.8 1292.8Z' fill='#ffff00'/><path d='M2140 1248.3L2197.8 1244.2L2263 1240.2L2312 1236.9L2344.5 1235.3L2377 1233.3L2409.7 1233.3L2434 1235.3L2450.5 1240.2L2475 1250.8L2475 1293.1L2426 1289.9L2377 1287.4L2344.5 1288.2L2295.6 1290.7L2246.7 1294L2181.5 1298.8L2142.4 1301.6Z' fill='#ffff00'/></svg>
</body></html>
